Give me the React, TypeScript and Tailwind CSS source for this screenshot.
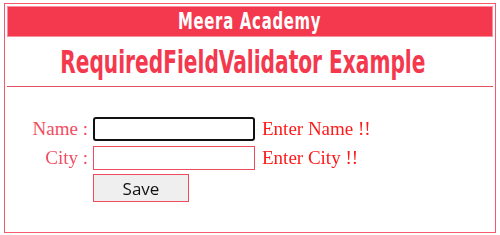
import * as React from "react"

export default function App() {
  const [name, setName] = React.useState("")
  const [city, setCity] = React.useState("")

  return (
    <div className="w-[500px] h-[235px] bg-white pt-[3px] pl-[4px]">
      <div className="w-[492px] h-[230px] border border-[#f65a6d] p-[2px]">
        {/* header bar */}
        <div className="h-[31px] bg-[#f4384d] border border-[#f7909c] flex items-center justify-center">
          <span className="text-white font-bold text-[23px] tracking-[1px] font-['DejaVu_Sans_Condensed',sans-serif] scale-x-[0.72] leading-none">
            Meera Academy
          </span>
        </div>

        {/* title */}
        <div className="h-[50px] flex items-center justify-center border-b border-[#e4505f]">
          <h1 className="text-[#f4384d] font-bold text-[32px] font-['DejaVu_Sans_Condensed',sans-serif] scale-x-[0.7] -translate-x-[7px] leading-none whitespace-nowrap shrink-0">
            RequiredFieldValidator Example
          </h1>
        </div>

        {/* form */}
        <div className="pt-[30px] font-['Liberation_Serif',serif] text-[19px]">
          <div className="flex items-center h-[24px]">
            <label className="w-[81px] text-right text-[#f24d62]">Name :</label>
            <input
              autoFocus
              value={name}
              onChange={(e) => setName(e.target.value)}
              className="ml-[5px] w-[162px] h-[24px] border-2 border-[#111] rounded-[3px] outline-none bg-white"
            />
            <span className="ml-[7px] text-[#ff1a1a]">Enter Name !!</span>
          </div>
          <div className="flex items-center h-[24px] mt-[5px]">
            <label className="w-[81px] text-right text-[#f24d62]">City :</label>
            <input
              value={city}
              onChange={(e) => setCity(e.target.value)}
              className="ml-[5px] w-[162px] h-[24px] border border-[#f04a5e] outline-none bg-white"
            />
            <span className="ml-[7px] text-[#ff1a1a]">Enter City !!</span>
          </div>
          <div className="flex mt-[4px]">
            <div className="w-[86px]" />
            <button className="w-[96px] h-[28px] bg-[#efefef] border border-[#f04a5e] text-[#111] text-[17px] font-['Open_Sans',sans-serif] leading-none">
              Save
            </button>
          </div>
        </div>
      </div>
    </div>
  )
}
